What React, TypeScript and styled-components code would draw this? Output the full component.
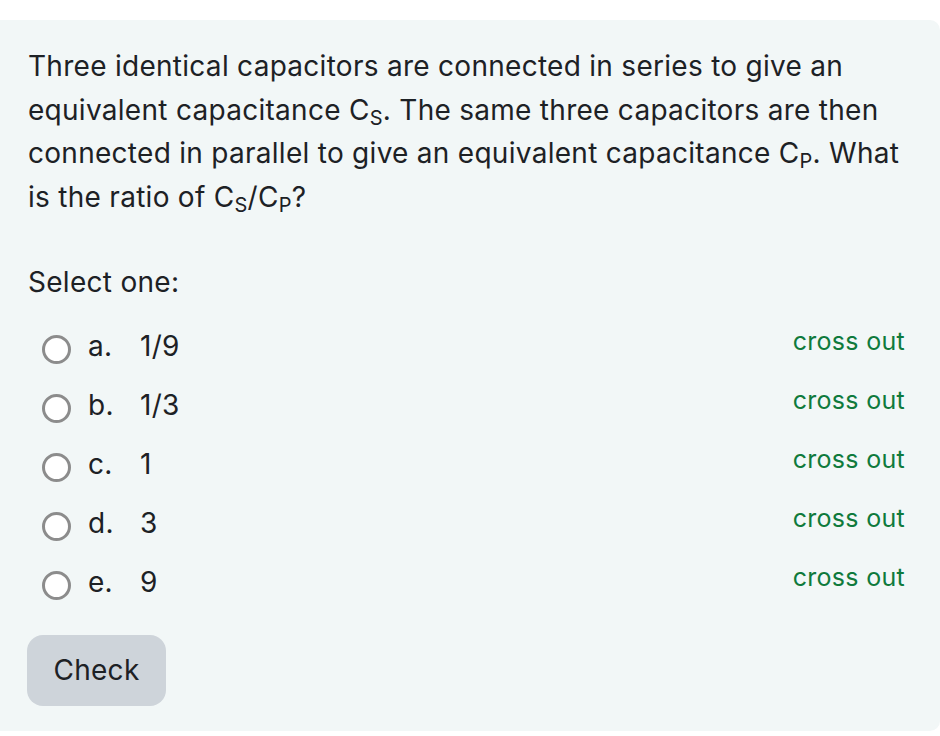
import React from "react";
import styled, { createGlobalStyle } from "styled-components";

const Global = createGlobalStyle`
  html, body { margin: 0; padding: 0; background: #ffffff; }
  body { font-family: Inter, "Noto Sans", sans-serif; color: #1d2125; }
`;

const Panel = styled.div`
  margin-top: 20px;
  width: 940px;
  box-sizing: border-box;
  background: #f2f7f7;
  border-radius: 0 10px 10px 0;
  padding: 25px 35px 25px 28px;
  display: flex;
  flex-direction: column;
  align-items: flex-start;
`;

const Question = styled.p`
  margin: 0;
  font-size: 28px;
  letter-spacing: 0.28px;
  line-height: 43.7px;
  color: #1d2125;
`;

const Sub = styled.sub`
  font-size: 20px;
  vertical-align: -5px;
  line-height: 20px;
`;

const Prompt = styled.div`
  margin-top: 40px;
  font-size: 28px;
  letter-spacing: 0.28px;
  line-height: 44px;
`;

const Options = styled.div`
  margin-top: 15px;
  align-self: stretch;
  display: flex;
  flex-direction: column;
`;

const Row = styled.div`
  display: flex;
  align-items: center;
  height: 59px;
  padding-left: 14px;
  padding-top: 2px;
  box-sizing: border-box;
`;

const Radio = styled.span`
  box-sizing: border-box;
  width: 29px;
  height: 29px;
  border-radius: 50%;
  border: 3px solid #8c8c8c;
  background: #ffffff;
  flex: none;
`;

const Label = styled.div`
  flex: 1;
  display: flex;
  padding-left: 17px;
  padding-bottom: 6px;
  font-size: 28px;
  letter-spacing: 0.28px;
  line-height: 44px;
`;

const Letter = styled.span`
  width: 52px;
`;

const CrossOut = styled.span`
  font-size: 25px;
  letter-spacing: 0.3px;
  line-height: 30px;
  padding-bottom: 16px;
  color: #0f7a3c;
`;

const Button = styled.button`
  margin-top: 21px;
  margin-left: -1px;
  width: 139px;
  height: 71px;
  border: none;
  border-radius: 16px;
  background: #ced4da;
  color: #1d2125;
  font-family: Inter, "Noto Sans", sans-serif;
  font-size: 28px;
  letter-spacing: 0.28px;
  padding: 0;
`;

const options = [
  ["a.", "1/9"],
  ["b.", "1/3"],
  ["c.", "1"],
  ["d.", "3"],
  ["e.", "9"],
];

export default function App() {
  return (
    <>
      <Global />
      <Panel>
        <Question>
          Three identical capacitors are connected in series to give an
          equivalent capacitance C<Sub>S</Sub>. The same three capacitors are then
          connected in parallel to give an equivalent capacitance C<Sub>P</Sub>. What
          is the ratio of C<Sub>S</Sub>/C<Sub>P</Sub>?
        </Question>
        <Prompt>Select one:</Prompt>
        <Options>
          {options.map(([l, v]) => (
            <Row key={l}>
              <Radio />
              <Label>
                <Letter>{l}</Letter>
                <span>{v}</span>
              </Label>
              <CrossOut>cross out</CrossOut>
            </Row>
          ))}
        </Options>
        <Button>Check</Button>
      </Panel>
    </>
  );
}
